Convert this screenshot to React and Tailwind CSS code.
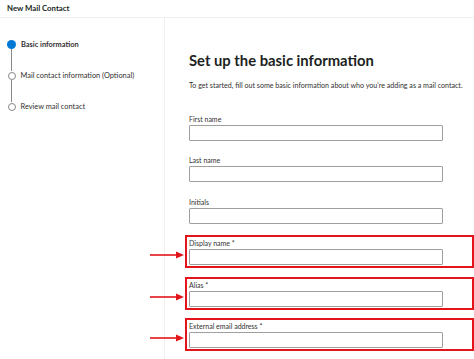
import React from 'react';

const steps = [
  { label: 'Basic information', active: true },
  { label: 'Mail contact information (Optional)', active: false },
  { label: 'Review mail contact', active: false },
];

const fields = [
  { label: 'First name', required: false },
  { label: 'Last name', required: false },
  { label: 'Initials', required: false },
  { label: 'Display name', required: true },
  { label: 'Alias', required: true },
  { label: 'External email address', required: true },
];

// Red arrow pointing at a highlighted field
const Arrow = () => (
  <svg
    className="absolute right-full top-[14px] mr-[3px]"
    width="34"
    height="8"
    viewBox="0 0 34 8"
  >
    <line x1="0" y1="4" x2="28" y2="4" stroke="#e3151a" strokeWidth="1.6" />
    <polygon points="26,0.5 34,4 26,7.5" fill="#e3151a" />
  </svg>
);

const Field = ({ label, required }) => (
  <div
    className={`relative border-2 pt-[1px] pb-[1px] pl-[2px] pr-[1px] ${
      required ? 'border-[#e3151a]' : 'border-transparent'
    }`}
  >
    {required && <Arrow />}
    <div className="text-[7px] leading-[10px] text-[#323130] mb-[1px]">
      {label}
      {required && <span> *</span>}
    </div>
    <input
      type="text"
      className="block w-[254px] h-[16px] border border-[#a19f9d] rounded-[1px] bg-white outline-none"
    />
  </div>
);

export default function App() {
  return (
    <div
      className="w-[474px] h-[359px] bg-white overflow-hidden flex flex-col"
      style={{ fontFamily: 'Lato, "Noto Sans", sans-serif' }}
    >
      {/* Header */}
      <div className="h-[18px] border-b border-[#f0f0f0] flex items-center pl-[7px]">
        <span className="text-[7.8px] font-bold text-[#201f1e]">New Mail Contact</span>
      </div>

      <div className="flex flex-1">
        {/* Steps */}
        <div className="w-[165px] border-r border-[#f0f0f0] pt-[22px] pl-[7px]">
          {steps.map((s, i) => (
            <div key={s.label}>
              <div className="flex items-center h-[9px]">
                {s.active ? (
                  <div className="w-[9px] h-[9px] rounded-full bg-[#0078d4]" />
                ) : (
                  <div className="w-[8px] h-[8px] ml-[0.5px] rounded-full border border-[#8a8886] bg-white" />
                )}
                <span
                  className={`ml-[5px] text-[7.4px] text-[#323130] ${s.active ? 'font-bold' : ''}`}
                >
                  {s.label}
                </span>
              </div>
              {i < steps.length - 1 && (
                <div className="ml-[4px] w-[1px] h-[22px] bg-[#8a8886]" />
              )}
            </div>
          ))}
        </div>

        {/* Form */}
        <div className="flex-1 pl-[20px] pt-[31px]">
          <h1 className="pl-[4px] text-[14.8px] leading-[22px] font-bold text-[#201f1e]">
            Set up the basic information
          </h1>
          <p className="pl-[4px] mt-[10px] text-[7.1px] leading-[9px] text-[#323130] whitespace-nowrap">
            To get started, fill out some basic information about who you're adding as a mail contact.
          </p>
          <div className="mt-[21px] flex flex-col gap-[8.4px]">
            {fields.map((f) => (
              <Field key={f.label} label={f.label} required={f.required} />
            ))}
          </div>
        </div>
      </div>
    </div>
  );
}
